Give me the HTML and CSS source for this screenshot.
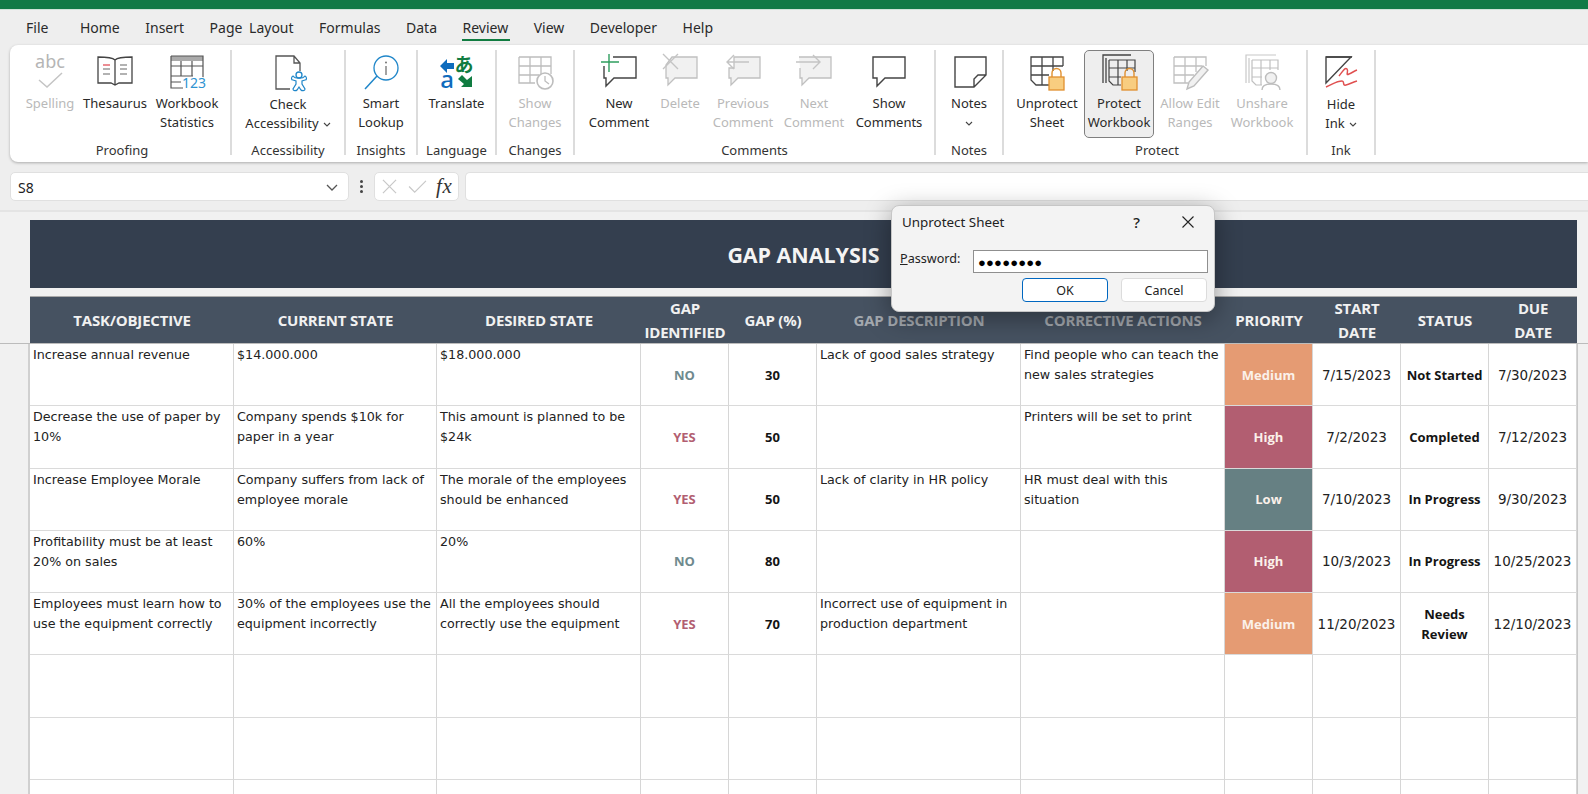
FILE: index.html
```html
<!DOCTYPE html>
<html lang="en">
<head>
<meta charset="utf-8">
<title>Gap Analysis - Excel</title>
<link rel="stylesheet" href="styles.css">
</head>
<body>
<div class="app">
  <div class="titlebar"></div>
  <nav class="tabs">
    <span>File</span><span class="home">Home</span><span>Insert</span><span class="wide">Page Layout</span><span>Formulas</span><span>Data</span><span class="active">Review</span><span>View</span><span>Developer</span><span>Help</span>
  </nav>

  <section class="ribbon">
    <div class="group g-proofing">
      <div class="btns">
        <div class="btn off w56">
          <svg class="ico" viewBox="0 0 36 36"><text x="18" y="14" text-anchor="middle" class="abc">abc</text><path d="M7 26l8 7L30 19" fill="none" stroke="#c4c4c4" stroke-width="1.5"/></svg>
          <div class="lbl">Spelling</div>
        </div>
        <div class="btn w74">
          <svg class="ico" viewBox="0 0 36 36"><path d="M18 6C15 3 8 3 1 3V29H14L18 31L22 29H35V3C28 3 21 3 18 6ZM18 6V31" fill="none" stroke="#444" stroke-width="1.3"/><path d="M6 11H13" stroke="#e0404a" stroke-width="1.2"/><path d="M6 15H13M6 20H13M23 11H30M23 15H30M23 20H30" stroke="#666" stroke-width="1.2"/></svg>
          <div class="lbl">Thesaurus</div>
        </div>
        <div class="btn w70">
          <svg class="ico" viewBox="0 0 36 36"><path d="M2 2H34V7H2Z" fill="#aaa"/><path d="M2 2H34V26M2 2V34H14M2 12H34M2 22H24M12 7V22M23 7V22M2 28H12" fill="none" stroke="#555" stroke-width="1.2"/><text x="25" y="34" text-anchor="middle" class="n123">123</text></svg>
          <div class="lbl">Workbook<br>Statistics</div>
        </div>
      </div>
      <div class="glabel">Proofing</div>
    </div>

    <div class="group g-access">
      <div class="btns center">
        <div class="btn low">
          <svg class="ico" viewBox="0 0 36 37"><path d="M20 35H6V2H24L30 9V17M24 2V9H30" fill="none" stroke="#555" stroke-width="1.3"/><circle cx="29" cy="21" r="3" fill="none" stroke="#1f86c9" stroke-width="1.3"/><path d="M23 22C21 23 21 26 23 26L26 27V30L23 35C23 37 26 37 27 36L29 33L31 36C32 37 35 37 35 35L32 30V27L35 26C37 26 37 23 35 22C33 25 25 25 23 22Z" fill="none" stroke="#1f86c9" stroke-width="1.2"/></svg>
          <div class="lbl">Check<br>Accessibility<svg class="chev" viewBox="0 0 8 5"><path d="M1 1l3 3 3-3" fill="none" stroke="#444" stroke-width="1.1"/></svg></div>
        </div>
      </div>
      <div class="glabel">Accessibility</div>
    </div>

    <div class="group g-insights">
      <div class="btns center">
        <div class="btn">
          <svg class="ico" viewBox="0 0 36 36"><circle cx="23" cy="14" r="12" fill="none" stroke="#1f86c9" stroke-width="1.3"/><path d="M14 22L2 35" stroke="#1f86c9" stroke-width="1.5"/><path d="M23 12V21" stroke="#666" stroke-width="1.2"/><circle cx="23" cy="8.5" r=".9" fill="#666"/></svg>
          <div class="lbl">Smart<br>Lookup</div>
        </div>
      </div>
      <div class="glabel">Insights</div>
    </div>

    <div class="group g-language">
      <div class="btns center">
        <div class="btn">
          <svg class="ico" viewBox="0 0 36 36"><path d="M2 12L9 5V9H16V15H9V19Z" fill="#0f6cbd"/><text x="9" y="34" text-anchor="middle" class="tr-a">a</text><text x="26" y="18" text-anchor="middle" class="tr-j">あ</text><path d="M34 22V33H23L26 30L20 25L24 21L29 26Z" fill="#107c41"/></svg>
          <div class="lbl">Translate</div>
        </div>
      </div>
      <div class="glabel">Language</div>
    </div>

    <div class="group g-changes">
      <div class="btns center">
        <div class="btn off">
          <svg class="ico" viewBox="0 0 36 36"><path d="M2 3H34V20M2 3V29H18M2 12H34M2 21H22M13 3V29M24 3V20" fill="none" stroke="#bdbdbd" stroke-width="1.3"/><circle cx="28" cy="27" r="8" fill="#fff" stroke="#bdbdbd" stroke-width="1.6"/><path d="M28 22V27L32 30" fill="none" stroke="#bdbdbd" stroke-width="1.3"/></svg>
          <div class="lbl">Show<br>Changes</div>
        </div>
      </div>
      <div class="glabel">Changes</div>
    </div>

    <div class="group g-comments">
      <div class="btns">
        <div class="btn w58">
          <svg class="ico" viewBox="0 0 36 36"><path d="M12 3H35V24H13L5 32V24H3V12" fill="none" stroke="#444" stroke-width="1.4"/><path d="M8 0V18M0 8H18" stroke="#2f9e5f" stroke-width="1.4"/></svg>
          <div class="lbl">New<br>Comment</div>
        </div>
        <div class="btn off w64">
          <svg class="ico" viewBox="0 0 36 36"><path d="M10 3H35V24H13L6 31V24H4V11L10 3Z" fill="#f1f1f1" stroke="#c0c0c0" stroke-width="1.3"/><path d="M1 0L16 15M16 0L1 15" stroke="#c4c4c4" stroke-width="1.4"/></svg>
          <div class="lbl">Delete</div>
        </div>
        <div class="btn off w62">
          <svg class="ico" viewBox="0 0 36 36"><path d="M9 3H35V24H13L6 31V24H4V14H9Z" fill="#f1f1f1" stroke="#c0c0c0" stroke-width="1.3"/><path d="M2 8H24M9 1L2 8L9 15" fill="none" stroke="#c4c4c4" stroke-width="1.4"/></svg>
          <div class="lbl">Previous<br>Comment</div>
        </div>
        <div class="btn off w80">
          <svg class="ico" viewBox="0 0 36 36"><path d="M3 3H35V24H13L6 31V24H4V14" fill="#f1f1f1" stroke="#c0c0c0" stroke-width="1.3"/><path d="M0 8H24M17 1L24 8L17 15" fill="none" stroke="#c4c4c4" stroke-width="1.4"/></svg>
          <div class="lbl">Next<br>Comment</div>
        </div>
        <div class="btn w70">
          <svg class="ico" viewBox="0 0 36 36"><path d="M2 3H34V24H14L6 32V24H2Z" fill="none" stroke="#444" stroke-width="1.4"/></svg>
          <div class="lbl">Show<br>Comments</div>
        </div>
      </div>
      <div class="glabel">Comments</div>
    </div>

    <div class="group g-notes">
      <div class="btns center">
        <div class="btn">
          <svg class="ico" viewBox="0 0 36 36"><path d="M3 3H34V21L22 33H3ZM34 21H26L22 25V33" fill="none" stroke="#444" stroke-width="1.4" transform="translate(1 0)"/></svg>
          <div class="lbl">Notes<br><svg class="chev solo" viewBox="0 0 8 5"><path d="M1 1l3 3 3-3" fill="none" stroke="#444" stroke-width="1.1"/></svg></div>
        </div>
      </div>
      <div class="glabel">Notes</div>
    </div>

    <div class="group g-protect">
      <div class="btns gap2">
        <div class="btn w70">
          <svg class="ico" viewBox="0 0 36 36"><path d="M24 3H2V26L7 31H20M2 12H34M2 21H20M13 3V31M24 3H34V12M24 3V17" fill="none" stroke="#444" stroke-width="1.3"/><rect x="20" y="23" width="15" height="13" fill="#f8cd80" stroke="#e0902f" stroke-width="1.3"/><path d="M23 23V19a4.5 4.5 0 0 1 9 0V23" fill="none" stroke="#e0902f" stroke-width="1.4"/></svg>
          <div class="lbl">Unprotect<br>Sheet</div>
        </div>
        <div class="btn w70 pressed">
          <svg class="ico" viewBox="0 0 36 36"><path d="M30 1H2V29M5 4V29" fill="none" stroke="#444" stroke-width="1.3"/><path d="M8 6H34V18M8 6V27L12 31H20M8 14H34M8 23H20M17 6V31M26 6V17" fill="none" stroke="#444" stroke-width="1.2"/><rect x="21" y="23" width="15" height="13" fill="#f8cd80" stroke="#e0902f" stroke-width="1.3"/><path d="M24 23V19a4.5 4.5 0 0 1 9 0V23" fill="none" stroke="#e0902f" stroke-width="1.4"/></svg>
          <div class="lbl">Protect<br>Workbook</div>
        </div>
        <div class="btn off w68">
          <svg class="ico" viewBox="0 0 36 36"><path d="M2 3H34V12M2 3V29H16M2 12H30M2 21H22M13 3V29M24 3V18" fill="none" stroke="#c0c0c0" stroke-width="1.3"/><path d="M31 12L36 16L22 32L15 35L17 28Z" fill="#f1f1f1" stroke="#bdbdbd" stroke-width="1.4"/></svg>
          <div class="lbl">Allow Edit<br>Ranges</div>
        </div>
        <div class="btn off w72">
          <svg class="ico" viewBox="0 0 36 36"><path d="M32 1H2V29M5 4V29" fill="none" stroke="#c8c8c8" stroke-width="1.2"/><path d="M8 6H34V16M8 6V27L12 31H18M8 14H34M8 23H18M17 6V31M26 6V16" fill="none" stroke="#c0c0c0" stroke-width="1.2"/><circle cx="27" cy="24" r="5.5" fill="#f1f1f1" stroke="#bdbdbd" stroke-width="1.4"/><path d="M18 36C18 31 22 30 27 30C32 30 36 31 36 36" fill="none" stroke="#bdbdbd" stroke-width="1.4"/></svg>
          <div class="lbl">Unshare<br>Workbook</div>
        </div>
      </div>
      <div class="glabel">Protect</div>
    </div>

    <div class="group g-ink">
      <div class="btns center">
        <div class="btn low">
          <svg class="ico" viewBox="0 0 36 37"><path d="M3 3H28L3 29Z" fill="none" stroke="#444" stroke-width="1.4"/><path d="M3 3H29" stroke="#444" stroke-width="1.6"/><path d="M16 22C20 17 22 13 24 15C26 17 22 22 26 20C29 19 31 17 34 16" fill="none" stroke="#e05050" stroke-width="1.5"/><path d="M3 33C10 30 14 27 19 27C22 27 19 32 23 31C27 30 30 28 34 27" fill="none" stroke="#e05050" stroke-width="1.5"/></svg>
          <div class="lbl">Hide<br>Ink<svg class="chev" viewBox="0 0 8 5"><path d="M1 1l3 3 3-3" fill="none" stroke="#444" stroke-width="1.1"/></svg></div>
        </div>
      </div>
      <div class="glabel">Ink</div>
    </div>
  </section>

  <section class="fbar">
    <div class="namebox"><span>S8</span><svg class="nb-chev" viewBox="0 0 12 7"><path d="M1 1l5 5 5-5" fill="none" stroke="#555" stroke-width="1.3"/></svg></div>
    <div class="vdots"><i></i><i></i><i></i></div>
    <div class="fxbox">
      <svg class="fx-x" viewBox="0 0 16 16"><path d="M1 1L15 15M15 1L1 15" stroke="#c8c8c8" stroke-width="1.3"/></svg>
      <svg class="fx-c" viewBox="0 0 20 16"><path d="M1 8L7 14L19 2" fill="none" stroke="#c8c8c8" stroke-width="1.3"/></svg>
      <span class="fx">fx</span>
    </div>
    <div class="finput"></div>
  </section>

  <main class="sheet">
    <div class="top">
      <h1 class="banner">GAP ANALYSIS</h1>
      <div class="grid head">
        <div>TASK/OBJECTIVE</div><div>CURRENT STATE</div><div>DESIRED STATE</div><div>GAP<br>IDENTIFIED</div><div>GAP (%)</div><div class="dim">GAP DESCRIPTION</div><div class="dim">CORRECTIVE ACTIONS</div><div>PRIORITY</div><div>START<br>DATE</div><div>STATUS</div><div>DUE<br>DATE</div>
      </div>
    </div>
    <div class="rows">
      <div class="grid row">
        <div class="c">Increase annual revenue</div><div class="c">$14.000.000</div><div class="c">$18.000.000</div><div class="c m flag no">NO</div><div class="c m pct">30</div><div class="c">Lack of good sales strategy</div><div class="c">Find people who can teach the new sales strategies</div><div class="c m pri medium">Medium</div><div class="c m date">7/15/2023</div><div class="c m st">Not Started</div><div class="c m date">7/30/2023</div>
      </div>
      <div class="grid row">
        <div class="c">Decrease the use of paper by 10%</div><div class="c">Company spends $10k for paper in a year</div><div class="c">This amount is planned to be $24k</div><div class="c m flag yes">YES</div><div class="c m pct">50</div><div class="c"></div><div class="c">Printers will be set to print</div><div class="c m pri high">High</div><div class="c m date">7/2/2023</div><div class="c m st">Completed</div><div class="c m date">7/12/2023</div>
      </div>
      <div class="grid row">
        <div class="c">Increase Employee Morale</div><div class="c">Company suffers from lack of employee morale</div><div class="c">The morale of the employees should be enhanced</div><div class="c m flag yes">YES</div><div class="c m pct">50</div><div class="c">Lack of clarity in HR policy</div><div class="c">HR must deal with this situation</div><div class="c m pri low-p">Low</div><div class="c m date">7/10/2023</div><div class="c m st">In Progress</div><div class="c m date">9/30/2023</div>
      </div>
      <div class="grid row">
        <div class="c">Profitability must be at least 20% on sales</div><div class="c">60%</div><div class="c">20%</div><div class="c m flag no">NO</div><div class="c m pct">80</div><div class="c"></div><div class="c"></div><div class="c m pri high">High</div><div class="c m date">10/3/2023</div><div class="c m st">In Progress</div><div class="c m date">10/25/2023</div>
      </div>
      <div class="grid row">
        <div class="c">Employees must learn how to use the equipment correctly</div><div class="c">30% of the employees use the equipment incorrectly</div><div class="c">All the employees should correctly use the equipment</div><div class="c m flag yes">YES</div><div class="c m pct">70</div><div class="c">Incorrect use of equipment in production department</div><div class="c"></div><div class="c m pri medium">Medium</div><div class="c m date">11/20/2023</div><div class="c m st">Needs<br>Review</div><div class="c m date">12/10/2023</div>
      </div>
      <div class="grid row"><div class="c"></div><div class="c"></div><div class="c"></div><div class="c"></div><div class="c"></div><div class="c"></div><div class="c"></div><div class="c"></div><div class="c"></div><div class="c"></div><div class="c"></div></div>
      <div class="grid row"><div class="c"></div><div class="c"></div><div class="c"></div><div class="c"></div><div class="c"></div><div class="c"></div><div class="c"></div><div class="c"></div><div class="c"></div><div class="c"></div><div class="c"></div></div>
      <div class="grid row"><div class="c"></div><div class="c"></div><div class="c"></div><div class="c"></div><div class="c"></div><div class="c"></div><div class="c"></div><div class="c"></div><div class="c"></div><div class="c"></div><div class="c"></div></div>
    </div>
  </main>

  <div class="dialog">
    <div class="d-title">
      <span class="d-name">Unprotect Sheet</span>
      <span class="d-help">?</span>
      <svg class="d-close" viewBox="0 0 12 12"><path d="M.5.5l11 11M11.5.5l-11 11" stroke="#222" stroke-width="1.1"/></svg>
    </div>
    <div class="d-field">
      <label class="d-label"><u>P</u>assword:</label>
      <div class="d-input">●●●●●●●●</div>
    </div>
    <div class="d-actions">
      <div class="d-btn primary">OK</div>
      <div class="d-btn">Cancel</div>
    </div>
  </div>
</div>
</body>
</html>
```

FILE: styles.css
```css
* { box-sizing: border-box; }
html, body { margin: 0; padding: 0; }
body { width: 1588px; height: 794px; overflow: hidden; background: #f0f0f0; font-family: "Noto Sans", "Open Sans", sans-serif; color: #222; }
.app { position: relative; width: 1588px; height: 794px; overflow: hidden; background: #eeeeee; }

.titlebar { height: 10px; background: #117a46; border-bottom: 1px solid #cfe3d8; }

.tabs { height: 35px; display: flex; gap: 25.5px; padding: 0 0 0 26px; font-size: 14px; line-height: 20px; color: #2a2a2a; }
.tabs span { position: relative; padding-top: 8px; }
.tabs .home { margin-left: 6px; }
.tabs .wide { word-spacing: 3px; }
.tabs .active::after { content: ""; position: absolute; left: 0; right: -2px; top: 29px; height: 2px; background: #107c41; }

.ribbon { display: flex; height: 117px; margin-left: 10px; padding: 5px 0 7px; background: #fff; border-radius: 8px 0 0 8px; box-shadow: 0 1px 3px rgba(0,0,0,.28); }
.group { display: flex; flex-direction: column; border-right: 2px solid #dcdcdc; }
.g-proofing { width: 222px; }
.g-proofing .btns { padding-left: 12px; }
.g-proofing .glabel { padding-left: 4px; }
.g-access { width: 114px; }
.g-insights { width: 72px; }
.g-language { width: 79px; }
.g-changes { width: 78px; }
.g-comments { width: 361px; }
.g-comments .btns { padding-left: 15px; }
.g-notes { width: 68px; }
.g-protect { width: 304px; }
.g-protect .btns { padding-left: 8px; }
.g-protect .glabel { padding-left: 4px; }
.g-ink { width: 68px; }
.btns { flex: 1; display: flex; }
.btns.center { justify-content: center; }
.btns.gap2 { gap: 2px; }
.btn { height: 88px; padding-top: 4px; display: flex; flex-direction: column; align-items: center; text-align: center; font-size: 13px; line-height: 19px; color: #2a2a2a; white-space: nowrap; }
.btn.off { color: #b9b9b9; }
.btn.low .ico { height: 37px; }
.w56 { width: 56px; } .w58 { width: 58px; } .w62 { width: 62px; } .w64 { width: 64px; } .w68 { width: 68px; } .w70 { width: 70px; } .w72 { width: 72px; } .w74 { width: 74px; } .w80 { width: 80px; }
.ico { width: 36px; height: 36px; flex: none; overflow: visible; }
.lbl { padding-top: 4px; }
.pressed { background: #eeeeee; border: 1px solid #7f7f7f; border-radius: 5px; padding-top: 3px; }
.glabel { height: 10px; line-height: 10px; text-align: center; font-size: 13px; color: #333; white-space: nowrap; }
.chev { width: 8px; height: 5px; margin-left: 4px; vertical-align: 1px; }
.chev.solo { margin: 0; }
.abc { font-size: 18px; fill: #b5b5b5; font-family: "Noto Sans", sans-serif; }
.n123 { font-size: 14px; fill: #2f93d1; font-family: "Noto Sans", sans-serif; paint-order: stroke; stroke: #fff; stroke-width: 2px; }
.tr-a { font-size: 24px; fill: #0f6cbd; font-family: "Noto Sans", sans-serif; font-weight: 500; }
.tr-j { font-size: 19px; fill: #107c41; font-family: "Noto Sans CJK JP", sans-serif; font-weight: 700; }

.fbar { height: 29px; margin-top: 10px; display: flex; align-items: stretch; padding-left: 10px; }
.namebox { width: 339px; display: flex; align-items: center; justify-content: space-between; padding: 1px 10px 0 7px; background: #fff; border: 1px solid #e0e0e0; border-radius: 5px; font-size: 14px; }
.nb-chev { width: 12px; height: 7px; }
.vdots { width: 25px; display: flex; flex-direction: column; align-items: center; justify-content: center; gap: 2px; }
.vdots i { width: 3px; height: 3px; border-radius: 50%; background: #444; }
.fxbox { width: 85px; display: flex; align-items: center; padding-left: 7px; background: #fff; border: 1px solid #e0e0e0; border-radius: 5px; }
.fx-x { width: 15px; height: 15px; }
.fx-c { width: 19px; height: 15px; margin-left: 11px; }
.fx { margin-left: 9px; font-family: "Liberation Serif", serif; font-style: italic; font-size: 21px; letter-spacing: .6px; color: #333; }
.finput { flex: 1; margin-left: 6px; background: #fff; border: 1px solid #e0e0e0; border-right: 0; border-radius: 5px 0 0 5px; }

.sheet { margin-top: 9px; border-top: 2px solid #e4e4e4; background: #f1f1f1; }
.top { padding: 8px 11px 0 30px; border-bottom: 1px solid #bcbcbc; }
.banner { margin: 0 0 8px; height: 68px; display: flex; align-items: center; justify-content: center; background: #343f4f; color: #f4f4f4; font-family: "Open Sans", sans-serif; font-weight: 700; font-size: 21.4px; }
.grid { display: grid; grid-template-columns: 204px 203px 204px 88px 88px 204px 204px 88px 88px 88px 88px; }
.head { height: 47px; background: #465261; border-top: 1px solid #a9a9a9; color: #f1f1f1; font-family: "Open Sans", sans-serif; font-weight: 700; font-size: 15px; line-height: 23.5px; }
.head > div { display: flex; align-items: center; justify-content: center; text-align: center; letter-spacing: -.2px; padding-bottom: 2px; }
.head .dim { color: #a4a9af; }

.rows { margin: 0 10px 0 28px; border-left: 2px solid #d0d0d0; border-right: 1px solid #c8c8c8; background: #fff; }
.row { height: 62.25px; }
.c { padding: 1px 3px; border-right: 1px solid #d6d6d6; border-bottom: 1px solid #dadada; font-family: "DejaVu Sans", sans-serif; font-size: 12.7px; line-height: 20px; color: #222; overflow: hidden; }
.m { display: flex; align-items: center; justify-content: center; text-align: center; padding: 0 1px; }
.flag, .pri, .st, .pct { font-family: "Open Sans", sans-serif; font-weight: 700; font-size: 13px; }
.no { color: #6f8a8e; }
.yes { color: #b25e71; }
.st, .pct { color: #141414; }
.date { font-size: 13.5px; }
.pri { color: #fbf1ea; }
.medium { background: #e59b73; }
.high { background: #b25e71; }
.low-p { background: #668083; }

.dialog { position: absolute; left: 891px; top: 205px; width: 324px; height: 107px; padding: 0 8px 0 6px; background: #f3f3f3; border: 1px solid #c6c6c6; border-radius: 8px; box-shadow: 0 6px 26px rgba(0,0,0,.38); font-size: 13px; color: #222; }
.d-title { height: 32px; display: flex; align-items: center; padding-left: 4px; }
.d-name { flex: 1; font-size: 13.4px; }
.d-help { margin-right: 42px; font-size: 15px; font-weight: 500; }
.d-close { width: 12px; height: 12px; margin-right: 12px; }
.d-field { display: flex; align-items: flex-start; height: 23px; margin-top: 12px; }
.d-label { width: 75px; padding-left: 2px; font-size: 12.6px; line-height: 17px; }
.d-input { flex: 1; height: 23px; margin-right: -2px; padding-left: 4px; background: #fff; border: 1px solid #8f8f8f; font-size: 13px; line-height: 22px; letter-spacing: .2px; color: #000; overflow: hidden; white-space: nowrap; }
.d-actions { display: flex; justify-content: flex-end; gap: 13px; margin: 5px -1px 0 0; }
.d-btn { width: 86px; height: 24px; display: flex; align-items: center; justify-content: center; background: #fff; border: 1px solid #dcdcdc; border-radius: 4px; font-size: 12.5px; padding-top: 1px; }
.d-btn.primary { border: 1px solid #0067c0; }
```
